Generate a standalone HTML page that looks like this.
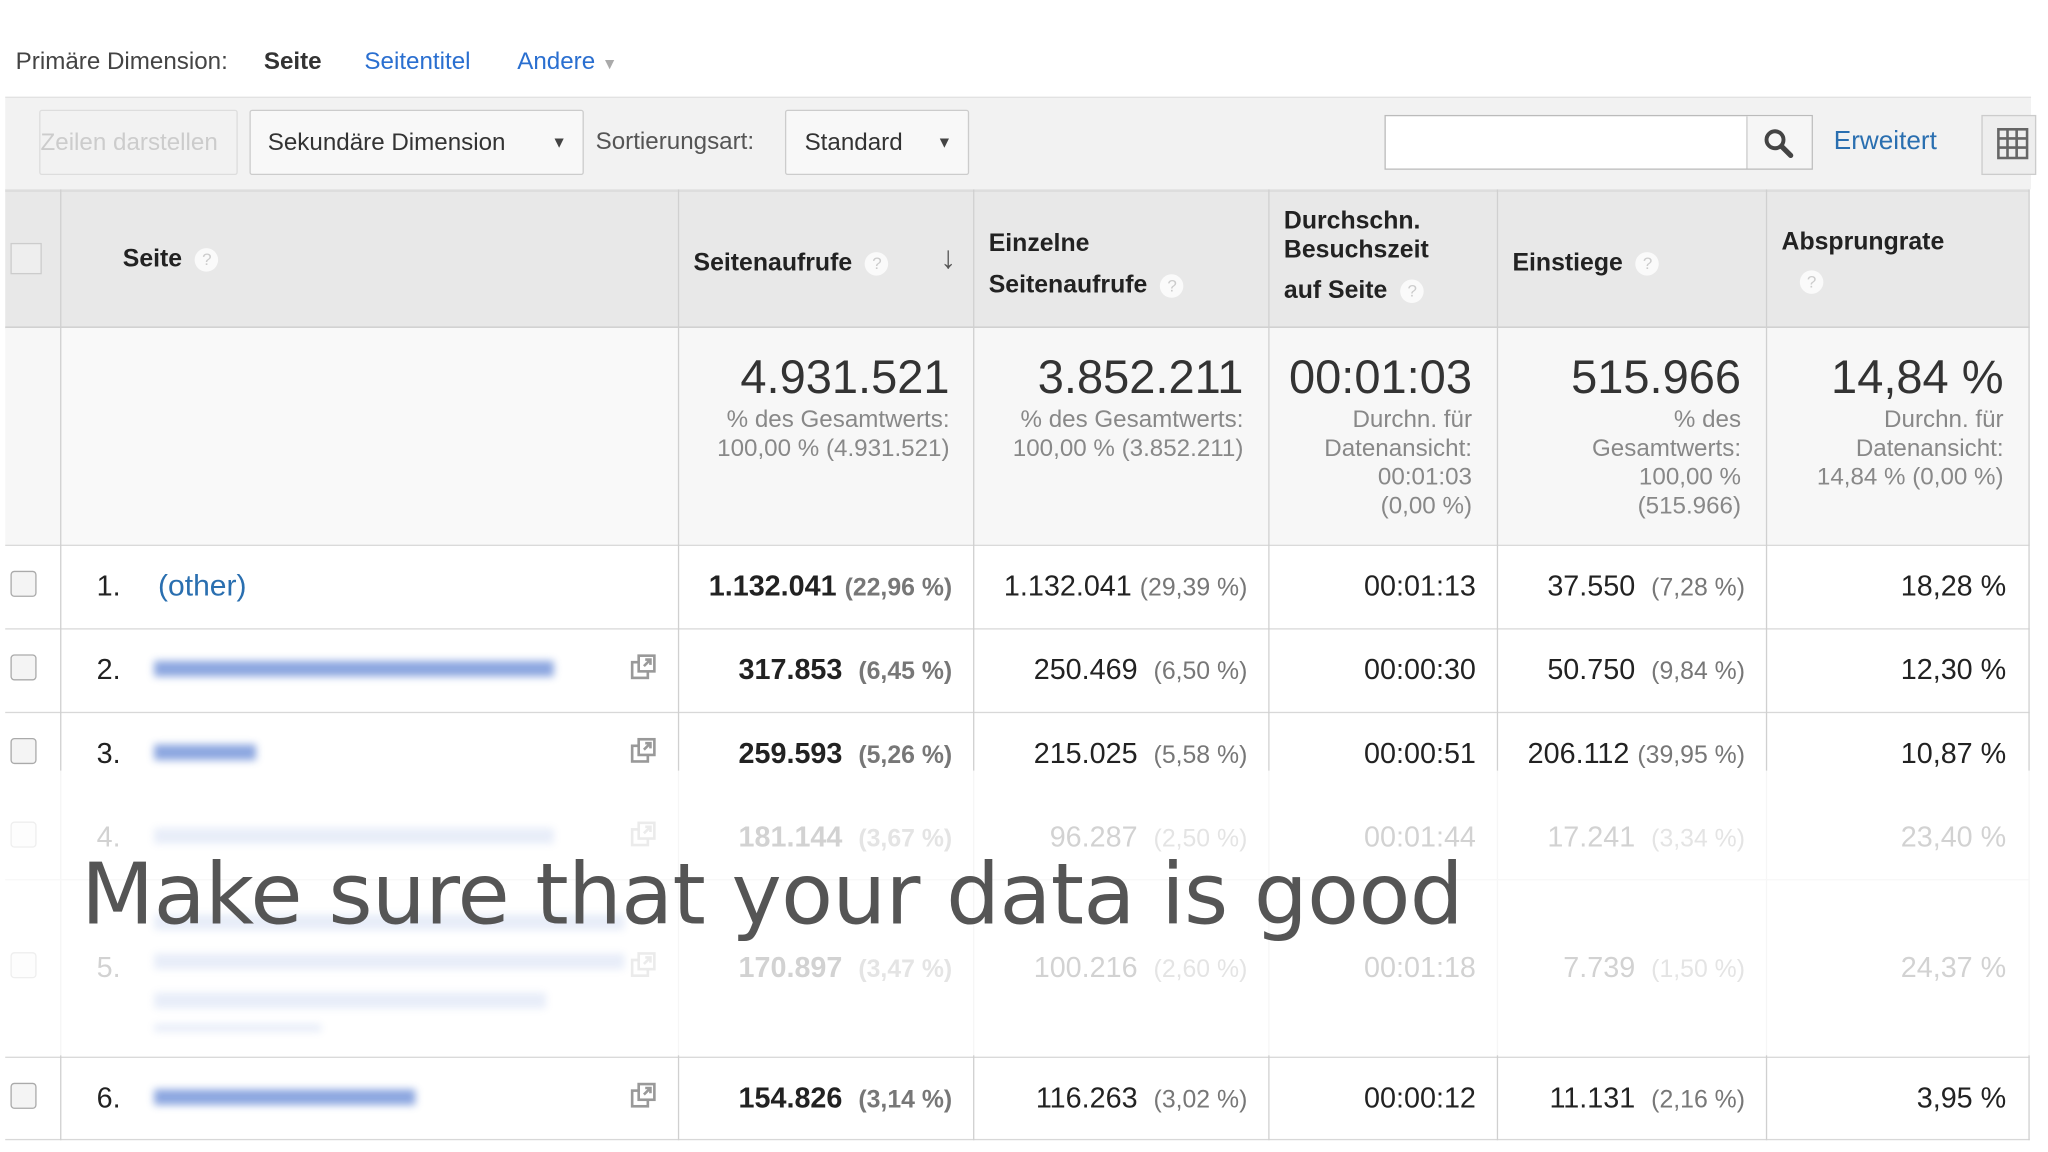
<!DOCTYPE html>
<html><head><meta charset="utf-8"><style>
html,body{margin:0;padding:0;width:2048px;height:1152px;overflow:hidden;background:#fff}
#w{position:absolute;left:0;top:0;width:1568px;height:882px;transform:scale(1.30612);transform-origin:0 0;font-family:"Liberation Sans",Arial,sans-serif;color:#222}
.a{position:absolute;white-space:nowrap}
.vl{position:absolute;width:1px;background:#d0d0d0}
.hl{position:absolute;height:1px;background:#d8d8d8;left:4px;width:1550px}
.q{display:inline-block;width:18px;height:18px;border-radius:50%;background:#fafafa;color:#ccc;font-size:13px;text-align:center;line-height:18px;font-weight:normal;vertical-align:middle;margin-left:10px}
.h{font-weight:bold;font-size:19px;color:#222}
.big{font-size:36px;color:#333}
.sub{font-size:18.5px;color:#888;line-height:22px;text-align:right}
.n{font-size:22px;color:#222}
.p{font-size:19px;color:#777}
.cb{position:absolute;left:8px;width:18px;height:18px;border:1px solid #aaa;border-radius:3px;background:#f4f4f4}
.blur{position:absolute;background:#6f90d8;filter:blur(3px);opacity:.8;height:12px}
.ext{position:absolute;left:482px}
</style></head><body><div id="w">
<div class="a" style="left:12px;top:36px;font-size:18.5px;color:#444">Primäre Dimension:</div>
<div class="a" style="left:202px;top:36px;font-size:18.5px;font-weight:bold;color:#333">Seite</div>
<div class="a" style="left:279px;top:36px;font-size:18.5px;color:#2a6fd0">Seitentitel</div>
<div class="a" style="left:396px;top:36px;font-size:18.5px;color:#2a6fd0">Andere <span style="color:#aaa;font-size:12px">▼</span></div>
<div class="a" style="left:4px;top:74px;width:1551px;height:70px;background:#f2f2f2;border-top:1px solid #e2e2e2"></div>
<div class="a" style="left:30px;top:84px;width:150px;height:48px;border:1px solid #ddd;border-radius:2px;font-size:18.5px;color:#ccc;line-height:48px;overflow:hidden">Zeilen darstellen</div>
<div class="a" style="left:191px;top:84px;width:254px;height:48px;border:1px solid #ccc;border-radius:2px;background:#f8f8f8;font-size:18.5px;color:#333;line-height:48px"><span style="margin-left:13px">Sekundäre Dimension</span><span style="position:absolute;right:12px;font-size:12px;color:#444">▼</span></div>
<div class="a" style="left:456px;top:97px;font-size:18.5px;color:#555">Sortierungsart:</div>
<div class="a" style="left:601px;top:84px;width:139px;height:48px;border:1px solid #ccc;border-radius:2px;background:#f8f8f8;font-size:18.5px;color:#333;line-height:48px"><span style="margin-left:14px">Standard</span><span style="position:absolute;right:12px;font-size:12px;color:#444">▼</span></div>
<div class="a" style="left:1060px;top:88px;width:326px;height:40px;border:1px solid #bbb;background:#fff"></div>
<div class="a" style="left:1337px;top:89px;width:49px;height:40px;border-left:1px solid #ccc;background:#f6f6f6"></div>
<svg class="a" style="left:1350px;top:98px" width="24" height="24" viewBox="0 0 24 24"><circle cx="9" cy="9" r="6.5" fill="none" stroke="#444" stroke-width="3"/><path d="M14 14 L21 21" stroke="#444" stroke-width="4" stroke-linecap="round"/></svg>
<div class="a" style="left:1404px;top:97px;font-size:20px;color:#2a6fb0">Erweitert</div>
<div class="a" style="left:1517px;top:88px;width:40px;height:44px;border:1px solid #ccc;background:#eee"></div>
<svg class="a" style="left:1529px;top:98px" width="24" height="24"><g stroke="#666" stroke-width="2" fill="none"><rect x="1" y="1" width="22" height="22"/><path d="M8 1V23M15 1V23M1 8H23M1 15H23"/></g></svg>
<div class="a" style="left:4px;top:145px;width:1550px;height:105px;background:#e8e8e8;border-top:2px solid #ddd"></div>
<div class="a" style="left:4px;top:251px;width:1550px;height:166px;background:#f7f7f7"></div>
<div class="a" style="left:46px;top:251px;width:473px;height:166px;background:#f9f9f9"></div>
<div class="hl" style="top:250px;background:#ccc"></div>
<div class="hl" style="top:417px"></div>
<div class="hl" style="top:481px"></div>
<div class="hl" style="top:545px"></div>
<div class="hl" style="top:809px"></div>
<div class="hl" style="top:872px"></div>
<div class="vl" style="left:46px;top:145px;height:728px"></div>
<div class="vl" style="left:519px;top:145px;height:728px"></div>
<div class="vl" style="left:745px;top:145px;height:728px"></div>
<div class="vl" style="left:971px;top:145px;height:728px"></div>
<div class="vl" style="left:1146px;top:145px;height:728px"></div>
<div class="vl" style="left:1352px;top:145px;height:728px"></div>
<div class="vl" style="left:1553px;top:145px;height:728px"></div>
<div class="a" style="left:8px;top:186px;width:22px;height:22px;border:1px solid #ccc;background:#eee"></div>
<div class="a h" style="left:94px;top:188px">Seite<span class="q">?</span></div>
<div class="a h" style="left:531px;top:191px">Seitenaufrufe<span class="q">?</span></div>
<div class="a" style="left:720px;top:184px;font-size:24px;color:#555">↓</div>
<div class="a h" style="left:757px;top:171px;line-height:32px">Einzelne<br>Seitenaufrufe<span class="q">?</span></div>
<div class="a h" style="left:983px;top:159px;line-height:22px">Durchschn.<br>Besuchszeit<br><span style="line-height:40px">auf Seite<span class="q">?</span></span></div>
<div class="a h" style="left:1158px;top:191px">Einstiege<span class="q">?</span></div>
<div class="a h" style="left:1364px;top:171px;line-height:30px">Absprungrate<br><span class="q" style="margin-left:14px">?</span></div>
<div class="a" style="left:519px;top:268px;width:208px;text-align:right"><div class="big">4.931.521</div><div class="sub">% des Gesamtwerts:<br>100,00 % (4.931.521)</div></div>
<div class="a" style="left:745px;top:268px;width:207px;text-align:right"><div class="big">3.852.211</div><div class="sub">% des Gesamtwerts:<br>100,00 % (3.852.211)</div></div>
<div class="a" style="left:971px;top:268px;width:156px;text-align:right"><div class="big">00:01:03</div><div class="sub">Durchn. für<br>Datenansicht:<br>00:01:03<br>(0,00 %)</div></div>
<div class="a" style="left:1146px;top:268px;width:187px;text-align:right"><div class="big">515.966</div><div class="sub">% des<br>Gesamtwerts:<br>100,00 %<br>(515.966)</div></div>
<div class="a" style="left:1352px;top:268px;width:182px;text-align:right"><div class="big">14,84 %</div><div class="sub">Durchn. für<br>Datenansicht:<br>14,84 % (0,00 %)</div></div>

<div class="cb" style="top:437px"></div><div class="a n" style="left:74px;top:436px">1.</div><div class="a" style="left:121px;top:435px;font-size:23px;color:#2a6fb0">(other)</div>
<div class="a n" style="left:533px;top:436px;width:196px;text-align:right;font-weight:bold">1.132.041 <span class="p">(22,96 %)</span></div>
<div class="a n" style="left:755px;top:436px;width:200px;text-align:right">1.132.041 <span class="p">(29,39 %)</span></div>
<div class="a n" style="left:990px;top:436px;width:140px;text-align:right">00:01:13</div>
<div class="a n" style="left:1150px;top:436px;width:186px;text-align:right">37.550 &nbsp;<span class="p">(7,28 %)</span></div>
<div class="a n" style="left:1360px;top:436px;width:176px;text-align:right">18,28 %</div>

<div class="cb" style="top:501px"></div><div class="a n" style="left:74px;top:500px">2.</div><div class="blur" style="left:118px;top:506px;width:306px"></div>
<svg class="ext" style="top:500px" width="22" height="22"><g fill="none" stroke="#999" stroke-width="2"><rect x="2" y="7" width="12" height="12"/><rect x="7" y="2" width="12" height="12" fill="#fff"/><path d="M11 10 L16 5 M12 5H16V9"/></g></svg>
<div class="a n" style="left:533px;top:500px;width:196px;text-align:right;font-weight:bold">317.853 &nbsp;<span class="p">(6,45 %)</span></div>
<div class="a n" style="left:755px;top:500px;width:200px;text-align:right">250.469 &nbsp;<span class="p">(6,50 %)</span></div>
<div class="a n" style="left:990px;top:500px;width:140px;text-align:right">00:00:30</div>
<div class="a n" style="left:1150px;top:500px;width:186px;text-align:right">50.750 &nbsp;<span class="p">(9,84 %)</span></div>
<div class="a n" style="left:1360px;top:500px;width:176px;text-align:right">12,30 %</div>

<div class="cb" style="top:565px"></div><div class="a n" style="left:74px;top:564px">3.</div><div class="blur" style="left:118px;top:570px;width:78px"></div>
<svg class="ext" style="top:564px" width="22" height="22"><g fill="none" stroke="#999" stroke-width="2"><rect x="2" y="7" width="12" height="12"/><rect x="7" y="2" width="12" height="12" fill="#fff"/><path d="M11 10 L16 5 M12 5H16V9"/></g></svg>
<div class="a n" style="left:533px;top:564px;width:196px;text-align:right;font-weight:bold">259.593 &nbsp;<span class="p">(5,26 %)</span></div>
<div class="a n" style="left:755px;top:564px;width:200px;text-align:right">215.025 &nbsp;<span class="p">(5,58 %)</span></div>
<div class="a n" style="left:990px;top:564px;width:140px;text-align:right">00:00:51</div>
<div class="a n" style="left:1150px;top:564px;width:186px;text-align:right">206.112 <span class="p">(39,95 %)</span></div>
<div class="a n" style="left:1360px;top:564px;width:176px;text-align:right">10,87 %</div>

<div class="cb" style="top:629px"></div><div class="a n" style="left:74px;top:628px">4.</div><div class="blur" style="left:118px;top:634px;width:306px"></div>
<svg class="ext" style="top:628px" width="22" height="22"><g fill="none" stroke="#999" stroke-width="2"><rect x="2" y="7" width="12" height="12"/><rect x="7" y="2" width="12" height="12" fill="#fff"/><path d="M11 10 L16 5 M12 5H16V9"/></g></svg>
<div class="a n" style="left:533px;top:628px;width:196px;text-align:right;font-weight:bold">181.144 &nbsp;<span class="p">(3,67 %)</span></div>
<div class="a n" style="left:755px;top:628px;width:200px;text-align:right">96.287 &nbsp;<span class="p">(2,50 %)</span></div>
<div class="a n" style="left:990px;top:628px;width:140px;text-align:right">00:01:44</div>
<div class="a n" style="left:1150px;top:628px;width:186px;text-align:right">17.241 &nbsp;<span class="p">(3,34 %)</span></div>
<div class="a n" style="left:1360px;top:628px;width:176px;text-align:right">23,40 %</div>
<div class="hl" style="top:673px"></div>

<div class="cb" style="top:729px"></div><div class="a n" style="left:74px;top:728px">5.</div><div class="blur" style="left:118px;top:700px;width:360px"></div><div class="blur" style="left:118px;top:730px;width:360px"></div><div class="blur" style="left:118px;top:760px;width:300px"></div><div class="blur" style="left:118px;top:784px;width:128px;height:6px"></div>
<svg class="ext" style="top:728px" width="22" height="22"><g fill="none" stroke="#999" stroke-width="2"><rect x="2" y="7" width="12" height="12"/><rect x="7" y="2" width="12" height="12" fill="#fff"/><path d="M11 10 L16 5 M12 5H16V9"/></g></svg>
<div class="a n" style="left:533px;top:728px;width:196px;text-align:right;font-weight:bold">170.897 &nbsp;<span class="p">(3,47 %)</span></div>
<div class="a n" style="left:755px;top:728px;width:200px;text-align:right">100.216 &nbsp;<span class="p">(2,60 %)</span></div>
<div class="a n" style="left:990px;top:728px;width:140px;text-align:right">00:01:18</div>
<div class="a n" style="left:1150px;top:728px;width:186px;text-align:right">7.739 &nbsp;<span class="p">(1,50 %)</span></div>
<div class="a n" style="left:1360px;top:728px;width:176px;text-align:right">24,37 %</div>

<div class="a" style="left:0;top:590px;width:1568px;height:218px;background:rgba(255,255,255,0.8)"></div>
<div class="a" style="left:62px;top:648px;font-family:'DejaVu Sans','Liberation Sans',sans-serif;font-size:65px;color:#555;letter-spacing:-0.5px">Make sure that your data is good</div>

<div class="cb" style="top:829px"></div><div class="a n" style="left:74px;top:828px">6.</div><div class="blur" style="left:118px;top:834px;width:200px"></div>
<svg class="ext" style="top:828px" width="22" height="22"><g fill="none" stroke="#999" stroke-width="2"><rect x="2" y="7" width="12" height="12"/><rect x="7" y="2" width="12" height="12" fill="#fff"/><path d="M11 10 L16 5 M12 5H16V9"/></g></svg>
<div class="a n" style="left:533px;top:828px;width:196px;text-align:right;font-weight:bold">154.826 &nbsp;<span class="p">(3,14 %)</span></div>
<div class="a n" style="left:755px;top:828px;width:200px;text-align:right">116.263 &nbsp;<span class="p">(3,02 %)</span></div>
<div class="a n" style="left:990px;top:828px;width:140px;text-align:right">00:00:12</div>
<div class="a n" style="left:1150px;top:828px;width:186px;text-align:right">11.131 &nbsp;<span class="p">(2,16 %)</span></div>
<div class="a n" style="left:1360px;top:828px;width:176px;text-align:right">3,95 %</div>
</div></body></html>
